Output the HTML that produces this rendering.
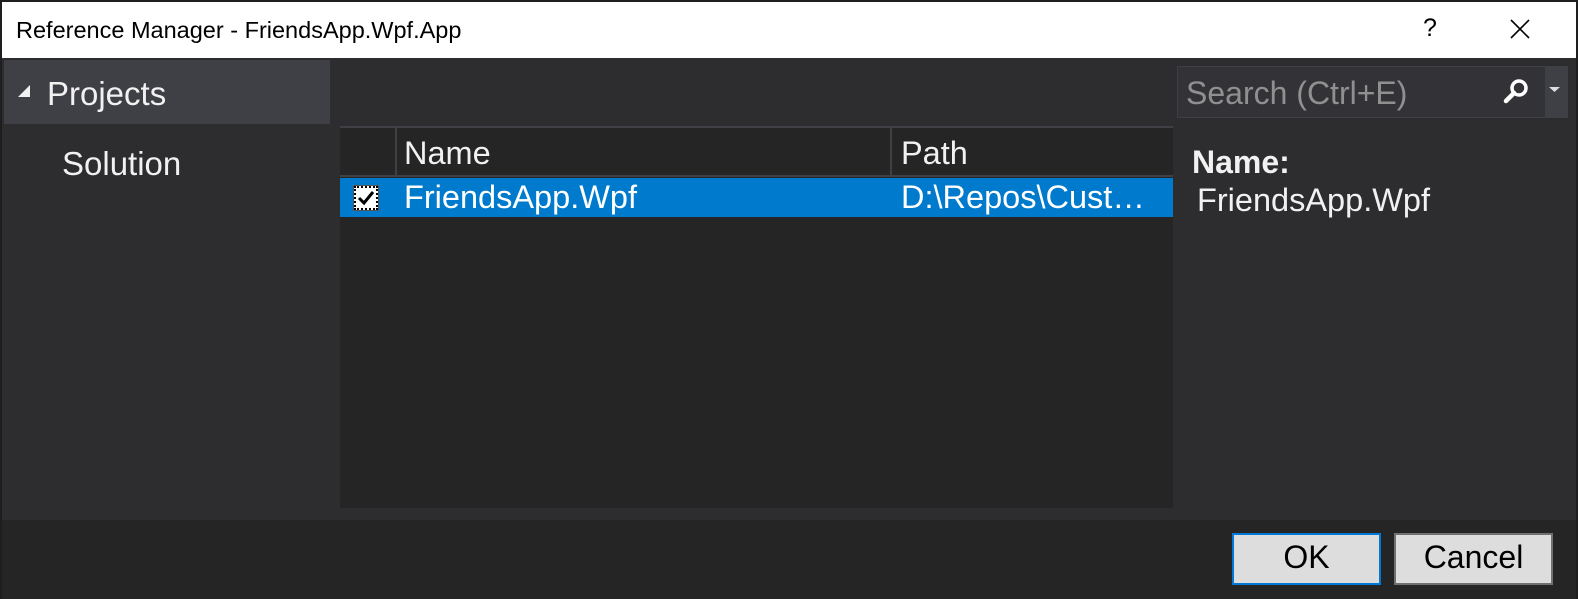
<!DOCTYPE html>
<html><head><style>
body{margin:0;width:1578px;height:599px;background:#2d2d30;position:relative;overflow:hidden;font-family:"Liberation Sans",sans-serif;}
div{position:absolute;box-sizing:border-box;}
.t{white-space:nowrap;}
</style></head><body>
<div style="left:0;top:0;width:1578px;height:599px;background:#1e1e1e"></div>
<div style="left:2px;top:2px;width:1574px;height:597px;background:#2d2d30"></div>
<div style="left:2px;top:2px;width:1574px;height:56px;background:#fff"></div>
<div class="t" style="left:16px;top:17px;font-size:23.5px;color:#000">Reference Manager - FriendsApp.Wpf.App</div>
<div class="t" style="left:1423px;top:14px;font-size:25px;color:#000">?</div>
<svg style="position:absolute;left:1510px;top:19px" width="20" height="20"><path d="M1 1L19 19M19 1L1 19" stroke="#000" stroke-width="1.6"/></svg>
<div style="left:4px;top:60px;width:326px;height:64px;background:#3f3f46"></div>
<svg style="position:absolute;left:17px;top:84px" width="14" height="14"><path d="M13 1L13 13L1 13Z" fill="#f1f1f1"/></svg>
<div class="t" style="left:47px;top:75px;font-size:33px;color:#f1f1f1">Projects</div>
<div class="t" style="left:62px;top:145px;font-size:33px;color:#f1f1f1">Solution</div>
<div style="left:340px;top:126px;width:833px;height:382px;background:#252526"></div>
<div style="left:340px;top:126px;width:833px;height:2px;background:#3f3f46"></div>
<div style="left:395px;top:128px;width:2px;height:48px;background:#3f3f46"></div>
<div style="left:890px;top:128px;width:2px;height:48px;background:#3f3f46"></div>
<div style="left:340px;top:175px;width:833px;height:2px;background:#3f3f46"></div>
<div class="t" style="left:404px;top:135px;font-size:32.5px;color:#f1f1f1">Name</div>
<div class="t" style="left:901px;top:135px;font-size:32.5px;color:#f1f1f1">Path</div>
<div style="left:340px;top:178px;width:833px;height:39px;background:#007acc"></div>
<div style="left:354px;top:186px;width:24px;height:24px;background:#fff;border:2px dotted #000;outline:1px solid #555"></div>
<svg style="position:absolute;left:356px;top:188px" width="20" height="20"><path d="M3 10L8 15L17 4" stroke="#000" stroke-width="3" fill="none"/></svg>
<div class="t" style="left:404px;top:179px;font-size:32.5px;color:#fff">FriendsApp.Wpf</div>
<div class="t" style="left:901px;top:179px;font-size:32.5px;color:#fff">D:\Repos\Cust…</div>
<div style="left:1177px;top:66px;width:391px;height:52px;background:#333337;border:1px solid #3f3f46"></div>
<div style="left:1545px;top:67px;width:22px;height:50px;background:#3f3f46"></div>
<div class="t" style="left:1186px;top:75px;font-size:32px;color:#909090">Search (Ctrl+E)</div>
<svg style="position:absolute;left:1502px;top:78px" width="30" height="28"><circle cx="17" cy="10" r="7" stroke="#fff" stroke-width="3.5" fill="none"/><path d="M12 15L4 23" stroke="#fff" stroke-width="4.5" stroke-linecap="round"/></svg>
<svg style="position:absolute;left:1549px;top:87px" width="12" height="8"><path d="M0 0L11 0L5.5 5Z" fill="#ddd"/></svg>
<div class="t" style="left:1192px;top:144px;font-size:32px;font-weight:bold;color:#f1f1f1">Name:</div>
<div class="t" style="left:1197px;top:182px;font-size:32.5px;color:#f1f1f1">FriendsApp.Wpf</div>
<div style="left:2px;top:520px;width:1574px;height:79px;background:#252526"></div>
<div style="left:1232px;top:533px;width:149px;height:52px;background:#dddddd;border:2px solid #0078d7"></div>
<div class="t" style="left:1232px;top:539px;width:149px;text-align:center;font-size:32px;color:#000">OK</div>
<div style="left:1394px;top:533px;width:159px;height:52px;background:#dddddd;border:2px solid #707070"></div>
<div class="t" style="left:1394px;top:539px;width:159px;text-align:center;font-size:32px;color:#000">Cancel</div>
</body></html>
